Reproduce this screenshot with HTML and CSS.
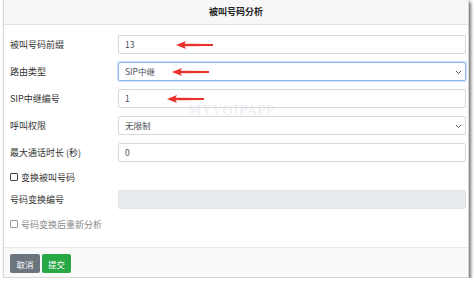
FILE: index.html
```html
<!DOCTYPE html>
<html>
<head>
    <title>被叫号码分析</title>
    <link rel="stylesheet" href="styles.css">
</head>
<body>
    <div class="modal">
        <div class="modal-header">被叫号码分析</div>

        <div class="modal-body">
            <div class="row">
                <label>被叫号码前缀</label>
                <div class="field">13
                    <svg class="arrow" style="left:57px" width="40" height="8" viewBox="0 0 40 8"><path d="M0 4 L10 0 L8.5 2.8 L37 3.1 L37 4.9 L8.5 5.2 L10 8 Z" fill="#e8322b"/></svg>
                </div>
            </div>
            <div class="row">
                <label>路由类型</label>
                <div class="field select focus">SIP中继
                    <svg class="arrow" style="left:53px" width="40" height="8" viewBox="0 0 40 8"><path d="M0 4 L10 0 L8.5 2.8 L37 3.1 L37 4.9 L8.5 5.2 L10 8 Z" fill="#e8322b"/></svg>
                    <svg class="chev" width="7" height="5" viewBox="0 0 7 5"><path d="M1 1 L3.5 3.5 L6 1" fill="none" stroke="#555" stroke-width="1"/></svg>
                </div>
            </div>
            <div class="row">
                <label>SIP中继编号</label>
                <div class="field">1
                    <svg class="arrow" style="left:48px" width="40" height="8" viewBox="0 0 40 8"><path d="M0 4 L10 0 L8.5 2.8 L37 3.1 L37 4.9 L8.5 5.2 L10 8 Z" fill="#e8322b"/></svg>
                </div>
            </div>
            <div class="row">
                <label>呼叫权限</label>
                <div class="field select">无限制
                    <svg class="chev" width="7" height="5" viewBox="0 0 7 5"><path d="M1 1 L3.5 3.5 L6 1" fill="none" stroke="#555" stroke-width="1"/></svg>
                </div>
            </div>
            <div class="row">
                <label>最大通话时长 (秒)</label>
                <div class="field">0</div>
            </div>
            <div class="check"><span class="box dark"></span>变换被叫号码</div>
            <div class="row tight">
                <label>号码变换编号</label>
                <div class="field disabled"></div>
            </div>
            <div class="check muted"><span class="box"></span>号码变换后重新分析</div>

            <div class="watermark">MYVOIPAPP</div>
        </div>

        <div class="modal-footer">
            <button class="btn cancel">取消</button>
            <button class="btn submit">提交</button>
        </div>
    </div>
</body>
</html>
```

FILE: styles.css
```css
body {
    margin: 0;
    background-color: #fff;
    font-family: "Noto Sans CJK SC", "Noto Sans", sans-serif;
    color: #333;
}
.modal {
    width: 464px;
    margin-left: 3px;
    border: 1px solid #d6d6d6;
    border-top: none;
    box-shadow: 2px 2px 3px rgba(0,0,0,0.55);
    background-color: #fff;
}
.modal-header {
    height: 24px;
    line-height: 24px;
    background-color: #f7f7f7;
    border-bottom: 1px solid #e2e2e2;
    text-align: center;
    font-size: 9px;
    font-weight: bold;
    color: #222;
}
.modal-body {
    position: relative;
    padding: 10px 2px 17px 6px;
}
.row {
    display: grid;
    grid-template-columns: 108px 1fr;
    align-items: center;
    margin-bottom: 8px;
}
.row.tight {
    margin-bottom: 0;
}
.row label {
    font-size: 9px;
    color: #333;
}
.field {
    position: relative;
    height: 17px;
    line-height: 17px;
    border: 1px solid #d4d9de;
    border-radius: 2px;
    padding: 0 6px;
    font-size: 8.5px;
    color: #495057;
    background-color: #fff;
}
.field.focus {
    border-color: #8fb8ea;
    box-shadow: 0 0 0 1px rgba(120,170,235,0.35);
}
.field.disabled {
    background-color: #e9ecef;
    border-color: #e0e4e8;
}
.arrow {
    position: absolute;
    top: 5px;
}
.chev {
    position: absolute;
    right: 3px;
    top: 7px;
}
.check {
    display: flex;
    align-items: center;
    gap: 3px;
    height: 12px;
    margin: 9px 0 7px 0;
    font-size: 9px;
    color: #333;
}
.check.muted {
    color: #888;
    margin: 9px 0 0 0;
}
.box {
    width: 6px;
    height: 6px;
    border: 1px solid #999;
    border-radius: 1px;
}
.box.dark {
    border-color: #444;
}
.watermark {
    position: absolute;
    left: 184px;
    top: 78px;
    font-family: "Liberation Serif", serif;
    font-size: 14px;
    font-weight: bold;
    letter-spacing: 0.3px;
    color: rgba(205,205,215,0.3);
}
.modal-footer {
    display: flex;
    gap: 2px;
    padding: 6px 6px 4px 6px;
    border-top: 1px solid #e8e8e8;
    background-color: #f9f9f9;
}
.btn {
    height: 19px;
    border: none;
    border-radius: 2px;
    padding: 0 5px;
    font-family: "Noto Sans CJK SC", sans-serif;
    font-size: 8.5px;
    color: #fff;
}
.cancel {
    width: 30px;
    background-color: #6c757d;
}
.submit {
    width: 29px;
    background-color: #28a745;
}
```
